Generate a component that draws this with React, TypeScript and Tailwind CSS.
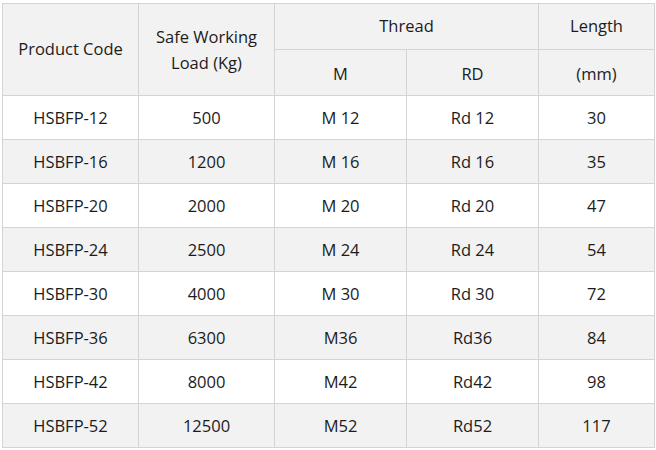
const rows = [
  ["HSBFP-12", "500", "M 12", "Rd 12", "30"],
  ["HSBFP-16", "1200", "M 16", "Rd 16", "35"],
  ["HSBFP-20", "2000", "M 20", "Rd 20", "47"],
  ["HSBFP-24", "2500", "M 24", "Rd 24", "54"],
  ["HSBFP-30", "4000", "M 30", "Rd 30", "72"],
  ["HSBFP-36", "6300", "M36", "Rd36", "84"],
  ["HSBFP-42", "8000", "M42", "Rd42", "98"],
  ["HSBFP-52", "12500", "M52", "Rd52", "117"],
]

export default function App() {
  return (
    <div
      className="w-[656px] h-[450px] bg-white pl-[2px] pt-[3px] text-[#1c1c1c] text-[16.5px]"
      style={{ fontFamily: '"Open Sans", "Noto Sans", sans-serif' }}
    >
      <table className="border-collapse table-fixed w-[652px]">
        <colgroup>
          <col className="w-[136px]" />
          <col className="w-[136px]" />
          <col className="w-[132px]" />
          <col className="w-[132px]" />
          <col className="w-[116px]" />
        </colgroup>
        <thead>
          <tr className="bg-[#f2f2f2] h-[46px]">
            <th rowSpan={2} className="border border-[#d4d4d4] font-normal text-center">
              Product Code
            </th>
            <th rowSpan={2} className="border border-[#d4d4d4] font-normal text-center leading-[26px]">
              Safe Working
              <br />
              Load (Kg)
            </th>
            <th colSpan={2} className="border border-[#d4d4d4] font-normal text-center">
              Thread
            </th>
            <th className="border border-[#d4d4d4] font-normal text-center">Length</th>
          </tr>
          <tr className="bg-[#f2f2f2] h-[46px]">
            <th className="border border-[#d4d4d4] font-normal text-center pt-[3px]">M</th>
            <th className="border border-[#d4d4d4] font-normal text-center pt-[3px]">RD</th>
            <th className="border border-[#d4d4d4] font-normal text-center pt-[3px]">(mm)</th>
          </tr>
        </thead>
        <tbody>
          {rows.map((row, i) => (
            <tr key={row[0]} className={`h-[44px] ${i % 2 === 1 ? "bg-[#f2f2f2]" : "bg-white"}`}>
              {row.map((cell, j) => (
                <td key={j} className="border border-[#d4d4d4] text-center pt-[1px]">
                  {cell}
                </td>
              ))}
            </tr>
          ))}
        </tbody>
      </table>
    </div>
  )
}
